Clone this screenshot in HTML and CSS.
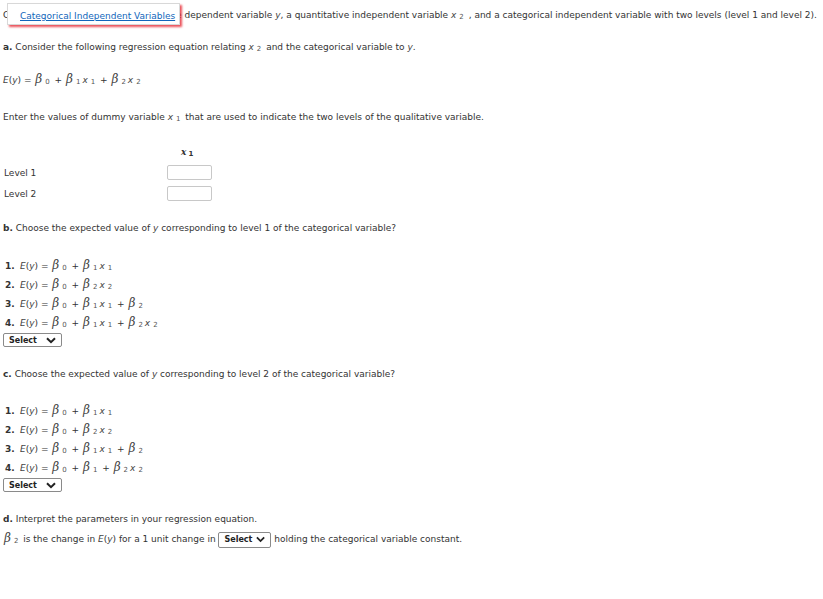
FILE: index.html
```html
<!DOCTYPE html>
<html>
<head>
<meta charset="utf-8">
<link rel="stylesheet" href="styles.css">
</head>
<body>
<div class="page">
  <div class="intro">
    <p class="line">Consider a regression analysis with one dependent variable <i class="v">y</i>, a quantitative independent variable <i class="v">x</i><sub>2</sub> , and a categorical independent variable with two levels (level 1 and level 2).</p>
    <div class="popup"><a href="#" class="plink">Categorical Independent Variables</a></div>
  </div>

  <p class="q qa"><b>a.</b> Consider the following regression equation relating <i class="v">x</i><sub>2</sub> and the categorical variable to <i class="v">y</i>.</p>

  <p class="eq"><i class="v">E</i>(<i class="v">y</i>) = <i class="b">β</i><sub>0</sub> + <i class="b">β</i><sub>1</sub><i class="v">x</i><sub>1</sub> + <i class="b">β</i><sub>2</sub><i class="v">x</i><sub>2</sub></p>

  <p class="q qe">Enter the values of dummy variable <i class="v">x</i><sub>1</sub> that are used to indicate the two levels of the qualitative variable.</p>

  <div class="dummy">
    <div class="dhead"><span class="hx"><i>x</i><sub>1</sub></span></div>
    <div class="drow"><span class="lvl">Level 1</span><span class="inbox"></span></div>
    <div class="drow"><span class="lvl">Level 2</span><span class="inbox"></span></div>
  </div>

  <p class="q qb"><b>b.</b> Choose the expected value of <i class="v">y</i> corresponding to level 1 of the categorical variable?</p>

  <ol class="opts opts-b">
    <li><b class="num">1.</b><i class="v">E</i>(<i class="v">y</i>) = <i class="b">β</i><sub>0</sub> + <i class="b">β</i><sub>1</sub><i class="v">x</i><sub>1</sub></li>
    <li><b class="num">2.</b><i class="v">E</i>(<i class="v">y</i>) = <i class="b">β</i><sub>0</sub> + <i class="b">β</i><sub>2</sub><i class="v">x</i><sub>2</sub></li>
    <li><b class="num">3.</b><i class="v">E</i>(<i class="v">y</i>) = <i class="b">β</i><sub>0</sub> + <i class="b">β</i><sub>1</sub><i class="v">x</i><sub>1</sub> + <i class="b">β</i><sub>2</sub></li>
    <li><b class="num">4.</b><i class="v">E</i>(<i class="v">y</i>) = <i class="b">β</i><sub>0</sub> + <i class="b">β</i><sub>1</sub><i class="v">x</i><sub>1</sub> + <i class="b">β</i><sub>2</sub><i class="v">x</i><sub>2</sub></li>
  </ol>
  <div class="sel"><span>Select</span><svg class="chev" viewBox="0 0 10 7" width="10" height="7"><path d="M1 1.2 L5 5.2 L9 1.2" fill="none" stroke="#222" stroke-width="2"/></svg></div>

  <p class="q qc"><b>c.</b> Choose the expected value of <i class="v">y</i> corresponding to level 2 of the categorical variable?</p>

  <ol class="opts opts-c">
    <li><b class="num">1.</b><i class="v">E</i>(<i class="v">y</i>) = <i class="b">β</i><sub>0</sub> + <i class="b">β</i><sub>1</sub><i class="v">x</i><sub>1</sub></li>
    <li><b class="num">2.</b><i class="v">E</i>(<i class="v">y</i>) = <i class="b">β</i><sub>0</sub> + <i class="b">β</i><sub>2</sub><i class="v">x</i><sub>2</sub></li>
    <li><b class="num">3.</b><i class="v">E</i>(<i class="v">y</i>) = <i class="b">β</i><sub>0</sub> + <i class="b">β</i><sub>1</sub><i class="v">x</i><sub>1</sub> + <i class="b">β</i><sub>2</sub></li>
    <li><b class="num">4.</b><i class="v">E</i>(<i class="v">y</i>) = <i class="b">β</i><sub>0</sub> + <i class="b">β</i><sub>1</sub> + <i class="b">β</i><sub>2</sub><i class="v">x</i><sub>2</sub></li>
  </ol>
  <div class="sel"><span>Select</span><svg class="chev" viewBox="0 0 10 7" width="10" height="7"><path d="M1 1.2 L5 5.2 L9 1.2" fill="none" stroke="#222" stroke-width="2"/></svg></div>

  <p class="q qd"><b>d.</b> Interpret the parameters in your regression equation.</p>
  <p class="q qd2"><i class="b">β</i><sub>2</sub> is the change in <i class="v">E</i>(<i class="v">y</i>) for a 1 unit change in <span class="sel inl"><span>Select</span><svg class="chev" viewBox="0 0 10 7" width="10" height="7"><path d="M1 1.2 L5 5.2 L9 1.2" fill="none" stroke="#222" stroke-width="2"/></svg></span> holding the categorical variable constant.</p>
</div>
</body>
</html>
```

FILE: styles.css
```css
html, body {
  margin: 0;
  padding: 0;
  background: #fff;
}
body {
  font-family: "DejaVu Sans", Verdana, sans-serif;
  font-size: 9px;
  color: #333;
}
.page {
  padding: 0 3px;
}
p { margin: 0; }
.intro {
  position: relative;
}
.line {
  padding-top: 9px;
  line-height: 12px;
  white-space: nowrap;
}
.popup {
  position: absolute;
  left: 4px;
  top: 3px;
  width: 173px;
  height: 22px;
  background: #fff;
  border: 1px solid #d8d8d8;
  box-shadow: 2px 2px 2px rgba(230, 40, 50, 0.8);
  display: flex;
  align-items: center;
  justify-content: flex-start;
  padding-left: 12px;
  box-sizing: border-box;
}
.plink {
  color: #1166bb;
  text-decoration: underline;
  font-size: 9px;
  margin-top: 3px;
}
i.v { font-style: italic; color: #444; }
i.b {
  font-style: italic;
  font-family: "DejaVu Serif", serif;
  font-size: 12px;
  line-height: 10px;
  color: #444;
  padding-left: 1px;
}
sub {
  font-size: 7px;
  line-height: 7px;
  vertical-align: -1px;
  margin-left: 3px;
  margin-right: 2px;
  color: #555;
}
.q { line-height: 12px; }
.qa { margin-top: 20px; }
.eq { margin-top: 20px; line-height: 14px; }
.qe { margin-top: 24px; }
.dummy {
  margin-top: 22px;
}
.dhead {
  height: 14px;
  margin-bottom: 3px;
  padding-left: 178px;
  display: flex;
  align-items: center;
}
.hx {
  font-weight: bold;
  color: #333;
}
.hx i { font-style: italic; font-family: "DejaVu Serif", serif; }
.hx sub { margin-left: 2px; font-weight: bold; color: #333; }
.drow {
  display: flex;
  align-items: center;
  height: 21px;
}
.lvl {
  width: 163px;
  padding-left: 1px;
}
.inbox {
  width: 43px;
  height: 13px;
  border: 1px solid #c8c8c8;
  border-radius: 2px;
  background: #fff;
}
.qb { margin-top: 18px; }
.opts {
  list-style: none;
  margin: 0;
  padding: 0 0 0 2px;
}
.opts-b { margin-top: 23px; }
.opts-c { margin-top: 22px; }
.opts li {
  height: 19px;
  line-height: 19px;
  white-space: nowrap;
}
.num {
  display: inline-block;
  width: 15px;
  font-weight: bold;
  color: #333;
}
.sel {
  display: flex;
  align-items: center;
  justify-content: space-between;
  box-sizing: border-box;
  width: 59px;
  height: 14px;
  border: 1px solid #8a8a8a;
  border-radius: 2px;
  padding: 0 5px 0 5px;
  font-weight: bold;
  font-size: 8px;
  color: #222;
  background: #fff;
}
.qc { margin-top: 21px; }
.qd { margin-top: 21px; }
.qd2 { margin-top: 6px; line-height: 16px; white-space: nowrap; }
.sel.inl {
  display: inline-flex;
  width: 53px;
  height: 16px;
  vertical-align: middle;
  gap: 4px;
  line-height: 14px;
}
```
